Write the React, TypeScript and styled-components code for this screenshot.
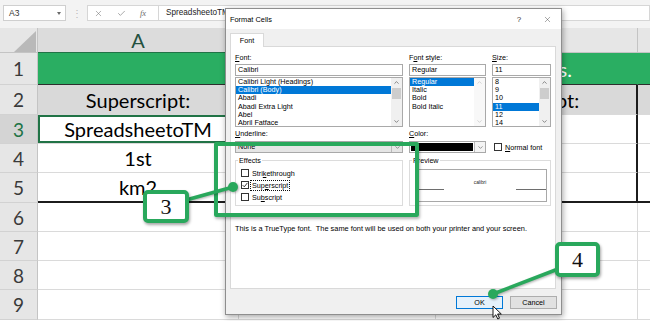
import React from "react";
import styled, { createGlobalStyle } from "styled-components";
import { X, Check, ChevronUp, ChevronDown } from "lucide-react";

const UI = `"Liberation Sans", Arial, sans-serif`;
const CELLFONT = `Lato, "Open Sans", sans-serif`;
const GREEN = "#2aae62";
const ANNOT = "#29a85c";
const GRID = "#dadada";

const GlobalStyle = createGlobalStyle`
  * { box-sizing: border-box; }
  html, body { margin: 0; padding: 0; background: #ffffff; }
  body { width: 650px; height: 321px; overflow: hidden; font-family: ${UI}; }
`;

const Page = styled.div`
  position: relative;
  width: 650px;
  height: 321px;
  overflow: hidden;
  background: #ffffff;
`;

/* ---------- formula bar ---------- */
const FormulaBar = styled.div`
  display: flex;
  align-items: flex-start;
  height: 28px;
  padding: 5px 0 0 3px;
  background: #f3f3f3;
`;
const NameBox = styled.div`
  display: flex;
  align-items: center;
  justify-content: space-between;
  width: 63px;
  height: 16px;
  padding: 0 4px 0 5px;
  background: #fff;
  border: 1px solid #cfcfcf;
  font: 8.5px ${UI};
  color: #333;
`;
const Caret = styled.span`
  width: 0;
  height: 0;
  border-left: 2.5px solid transparent;
  border-right: 2.5px solid transparent;
  border-top: 3px solid #6a6a6a;
`;
const Grip = styled.div`
  display: flex;
  align-items: center;
  justify-content: center;
  width: 21px;
  height: 16px;
  color: #b8b8b8;
  font: 10px ${UI};
`;
const FxBox = styled.div`
  display: flex;
  align-items: center;
  gap: 14px;
  width: 72px;
  height: 16px;
  padding-left: 6px;
  background: #fff;
  border: 1px solid #d6d6d6;
  color: #707070;
`;
const FxText = styled.span`
  width: 9px;
  font: italic 8.5px "Liberation Serif", serif;
  color: #6a6a6a;
`;
const FormulaInput = styled.div`
  flex: 1;
  height: 16px;
  padding-left: 7px;
  background: #fff;
  border: 1px solid #d6d6d6;
  border-left: none;
  font: 8.2px/14px ${UI};
  color: #222;
`;

/* ---------- sheet ---------- */
const Sheet = styled.div`
  display: grid;
  grid-template-columns: 38px 201px 197px 202px 100px;
  grid-template-rows: 25px 32px 30px 29px 29px 30px 29px 29px 29px 30px;
  width: 738px;
`;
const Corner = styled.div`
  display: flex;
  align-items: flex-end;
  justify-content: flex-end;
  padding: 0 1px 0 0;
  background: #e6e6e6;
  border-right: 1px solid #c4c4c4;
  border-bottom: 1px solid #c4c4c4;
`;
const ColHeader = styled.div<{ $selected?: boolean }>`
  display: flex;
  align-items: center;
  justify-content: center;
  background: ${(p) => (p.$selected ? "#dcdcdc" : "#e6e6e6")};
  border-right: 1px solid #c4c4c4;
  border-bottom: 1px solid ${(p) => (p.$selected ? "#217346" : "#c4c4c4")};
  color: ${(p) => (p.$selected ? "#24513f" : "#444")};
  font: 20px ${CELLFONT};
`;
const RowHeader = styled.div<{ $selected?: boolean }>`
  display: flex;
  align-items: center;
  justify-content: center;
  background: ${(p) => (p.$selected ? "#d4d4d4" : "#e6e6e6")};
  border-right: 1px solid #c4c4c4;
  border-bottom: 1px solid #d2d2d2;
  color: ${(p) => (p.$selected ? "#217346" : "#3a3a3a")};
  font: 19px ${CELLFONT};
`;
type Fill = "green" | "gray" | undefined;
const fillColor = (f: Fill) => (f === "green" ? GREEN : f === "gray" ? "#d9d9d9" : "#ffffff");
const Cell = styled.div<{
  $fill?: Fill;
  $active?: boolean;
  $edgeRight?: boolean;
  $edgeBottom?: boolean;
  $lineBottom?: boolean;
  $span?: number;
  $end?: boolean;
}>`
  display: flex;
  align-items: center;
  justify-content: ${(p) => (p.$end ? "flex-end" : "center")};
  padding-right: ${(p) => (p.$end ? "65px" : "0")};
  min-width: 0;
  overflow: hidden;
  white-space: nowrap;
  grid-column: span ${(p) => p.$span ?? 1};
  background: ${(p) => fillColor(p.$fill)};
  border-right: ${(p) =>
    p.$edgeRight ? "2px solid #1c1c1c" : `1px solid ${p.$fill === "green" ? GREEN : p.$fill === "gray" ? "#c9c9c9" : GRID}`};
  border-bottom: ${(p) =>
    p.$edgeBottom ? "2px solid #1c1c1c" : p.$lineBottom ? "1px solid #2e2e2e" : `1px solid ${GRID}`};
  box-shadow: ${(p) => (p.$active ? "inset 0 0 0 2px #217346" : "none")};
  font: 20px ${CELLFONT};
  color: ${(p) => (p.$fill === "green" ? "#ffffff" : "#000000")};
`;

/* ---------- dialog ---------- */
const Dialog = styled.div`
  position: absolute;
  left: 225px;
  top: 8px;
  width: 337px;
  height: 307px;
  display: flex;
  flex-direction: column;
  background: #f0f0f0;
  border: 1px solid #8e8e8e;
  box-shadow: 1px 2px 6px rgba(0, 0, 0, 0.35);
  font: 7.2px ${UI};
  color: #000;
`;
const TitleBar = styled.div`
  display: flex;
  align-items: center;
  height: 20px;
  padding-left: 4px;
  background: #ffffff;
  font-size: 7.4px;
`;
const TitleButtons = styled.div`
  display: flex;
  margin-left: auto;
  height: 100%;
`;
const TitleButton = styled.div`
  display: flex;
  align-items: center;
  justify-content: center;
  width: 28px;
  height: 100%;
  color: #333;
  font-size: 8px;
`;
const TabStrip = styled.div`
  display: flex;
  align-items: flex-end;
  height: 17px;
  padding-left: 4px;
`;
const Tab = styled.div`
  position: relative;
  z-index: 1;
  display: flex;
  align-items: center;
  justify-content: center;
  width: 34px;
  height: 14px;
  margin-bottom: -1px;
  background: #ffffff;
  border: 1px solid #d9d9d9;
  border-bottom: none;
`;
const Panel = styled.div`
  display: flex;
  flex-direction: column;
  height: 243px;
  margin: 0 5px 0 4px;
  padding: 6px 4px 0;
  background: #ffffff;
  border: 1px solid #d9d9d9;
`;
const Columns = styled.div<{ $gapTop?: number }>`
  display: grid;
  grid-template-columns: 168px 77px 59px;
  column-gap: 6px;
  margin-top: ${(p) => p.$gapTop ?? 0}px;
`;
const Field = styled.div<{ $offset?: number }>`
  display: flex;
  flex-direction: column;
  gap: 1px;
  padding-top: ${(p) => p.$offset ?? 0}px;
`;
const MidField = styled(Field)`
  gap: 2px;
`;
const Label = styled.div`
  height: 10px;
  line-height: 10px;
  white-space: nowrap;
`;
const TextBox = styled.div`
  height: 12px;
  padding-left: 2px;
  line-height: 10px;
  background: #fff;
  border: 1px solid #a9a9a9;
`;
const ListFrame = styled.div`
  display: flex;
  height: 50px;
  background: #fff;
  border: 1px solid #a9a9a9;
`;
const ListItems = styled.div`
  flex: 1;
  min-width: 0;
`;
const ListItem = styled.div<{ $selected?: boolean }>`
  height: 8.2px;
  padding-left: 2px;
  line-height: 8.2px;
  white-space: nowrap;
  overflow: hidden;
  background: ${(p) => (p.$selected ? "#0078d7" : "transparent")};
  color: ${(p) => (p.$selected ? "#ffffff" : "#000000")};
`;
const ScrollBar = styled.div<{ $disabled?: boolean }>`
  display: flex;
  flex-direction: column;
  width: 11px;
  background: ${(p) => (p.$disabled ? "#f8f8f8" : "#f0f0f0")};
  color: ${(p) => (p.$disabled ? "#c4c4c4" : "#5a5a5a")};
`;
const ScrollArrow = styled.div`
  display: flex;
  align-items: center;
  justify-content: center;
  height: 9px;
`;
const ScrollThumb = styled.div`
  height: 11px;
  margin: 1px 1px 0;
  background: #cdcdcd;
`;
const ScrollSpace = styled.div`
  flex: 1;
`;
const Combo = styled.div<{ $gray?: boolean }>`
  display: flex;
  align-items: stretch;
  height: 12px;
  background: ${(p) => (p.$gray ? "#e5e5e5" : "#ffffff")};
  border: 1px solid #a9a9a9;
`;
const ComboText = styled.div`
  flex: 1;
  padding-left: 2px;
  line-height: 10px;
`;
const Swatch = styled.div`
  flex: 1;
  margin: 1px;
  background: #000;
`;
const ComboArrow = styled.div<{ $gray?: boolean }>`
  display: flex;
  align-items: center;
  justify-content: center;
  width: 11px;
  border-left: 1px solid #b9b9b9;
  background: ${(p) => (p.$gray ? "#e5e5e5" : "#f4f4f4")};
  color: #555;
`;
const CheckRow = styled.div<{ $height?: number }>`
  display: flex;
  align-items: center;
  gap: 2px;
  height: ${(p) => p.$height ?? 12}px;
  padding-left: 2px;
  white-space: nowrap;
`;
const Box = styled.div`
  display: flex;
  align-items: center;
  justify-content: center;
  width: 8px;
  height: 8px;
  background: #fff;
  border: 1px solid #333;
`;
const CheckText = styled.span<{ $focus?: boolean }>`
  padding: 0 1px;
  line-height: 9px;
  outline: ${(p) => (p.$focus ? "1px dotted #111" : "none")};
`;
const Groups = styled.div`
  display: grid;
  grid-template-columns: 168px 1fr;
  column-gap: 6px;
  margin-top: 2.5px;
`;
const Group = styled.fieldset<{ $pt: number; $pl: number }>`
  margin: 0;
  min-width: 0;
  padding: ${(p) => p.$pt}px 3px 2px ${(p) => p.$pl}px;
  border: 1px solid #dcdcdc;
`;
const Legend = styled.legend<{ $shift?: number }>`
  margin-left: ${(p) => p.$shift ?? -1}px;
  padding: 0 1px;
  font-size: 7.2px;
  line-height: 9px;
`;
const PreviewBox = styled.div`
  display: grid;
  grid-template-columns: 25px 1fr 30px;
  align-items: start;
  height: 33px;
  border: 1px solid #a8a8a8;
  background: #fff;
`;
const BaseLine = styled.div`
  height: 1px;
  margin-top: 19px;
  background: #6e6e6e;
`;
const PreviewText = styled.div`
  margin-top: 10px;
  text-align: center;
  font: 4.8px ${UI};
  line-height: 6px;
  color: #222;
`;
const Note = styled.div`
  margin-top: 18px;
  line-height: 10px;
  font-size: 7.4px;
  white-space: pre;
`;
const Footer = styled.div`
  flex: 1;
  display: flex;
  align-items: center;
  justify-content: flex-end;
  gap: 7px;
  padding: 1px 4px 0 0;
`;
const Button = styled.div<{ $primary?: boolean }>`
  display: flex;
  align-items: center;
  justify-content: center;
  width: 47px;
  height: 13px;
  background: ${(p) => (p.$primary ? "#e5f1fb" : "#e1e1e1")};
  border: 1px solid ${(p) => (p.$primary ? "#0078d7" : "#adadad")};
`;

/* ---------- annotations ---------- */
const Highlight = styled.div`
  position: absolute;
  left: 214px;
  top: 142px;
  width: 205px;
  height: 75px;
  border: 4px solid ${ANNOT};
  border-radius: 2px;
  box-shadow: 1px 2px 3px rgba(0, 0, 0, 0.3);
`;
const Connectors = styled.svg`
  position: absolute;
  left: 0;
  top: 0;
  pointer-events: none;
  filter: drop-shadow(1px 1.5px 1px rgba(0, 0, 0, 0.3));
`;
const Callout = styled.div<{ $x: number; $y: number; $w: number; $h: number }>`
  position: absolute;
  left: ${(p) => p.$x}px;
  top: ${(p) => p.$y}px;
  width: ${(p) => p.$w}px;
  height: ${(p) => p.$h}px;
  display: flex;
  align-items: center;
  justify-content: center;
  background: #ffffff;
  border: 4px solid ${ANNOT};
  border-radius: 5px;
  box-shadow: 1px 2px 3px rgba(0, 0, 0, 0.35);
  font: 22px "Liberation Serif", "Times New Roman", serif;
  color: #111;
`;
const Cursor = styled.svg`
  position: absolute;
  left: 492px;
  top: 305px;
`;

/* ---------- pieces ---------- */
type ListProps = { items: string[]; selected: number; disabled?: boolean };
const ListBox = ({ items, selected, disabled }: ListProps) => (
  <ListFrame>
    <ListItems>
      {items.map((t, i) => (
        <ListItem key={t} $selected={i === selected}>
          {t}
        </ListItem>
      ))}
    </ListItems>
    <ScrollBar $disabled={disabled}>
      <ScrollArrow>
        <ChevronUp size={7} strokeWidth={2.4} />
      </ScrollArrow>
      {!disabled && <ScrollThumb />}
      <ScrollSpace />
      <ScrollArrow>
        <ChevronDown size={7} strokeWidth={2.4} />
      </ScrollArrow>
    </ScrollBar>
  </ListFrame>
);

const CheckBox = ({ checked }: { checked?: boolean }) => (
  <Box>
    {checked && (
      <svg width="6" height="6" viewBox="0 0 6 6">
        <path d="M0.6 3.1 L2.3 4.8 L5.4 0.9" fill="none" stroke="#222" strokeWidth="0.9" />
      </svg>
    )}
  </Box>
);

export default function App() {
  const lowerRows = [6, 7, 8, 9];
  return (
    <Page>
      <GlobalStyle />
      <FormulaBar>
        <NameBox>
          A3
          <Caret />
        </NameBox>
        <Grip>⋮</Grip>
        <FxBox>
          <X size={9} strokeWidth={1.4} />
          <Check size={9} strokeWidth={1.6} />
          <FxText>fx</FxText>
        </FxBox>
        <FormulaInput>SpreadsheetoTM</FormulaInput>
      </FormulaBar>

      <Sheet>
        <Corner>
          <svg width="22" height="21" viewBox="0 0 22 21">
            <polygon points="22,0 22,21 0,21" fill="#b9b9b9" />
          </svg>
        </Corner>
        <ColHeader $selected>A</ColHeader>
        <ColHeader>B</ColHeader>
        <ColHeader>C</ColHeader>
        <ColHeader />

        <RowHeader>1</RowHeader>
        <Cell $fill="green" $span={3} $end $lineBottom>
          Subscripts.
        </Cell>
        <Cell $fill="green" $lineBottom />

        <RowHeader>2</RowHeader>
        <Cell $fill="gray">Superscript:</Cell>
        <Cell $fill="gray" />
        <Cell $fill="gray" $edgeRight>
          Subscript:
        </Cell>
        <Cell $fill="gray" />

        <RowHeader $selected>3</RowHeader>
        <Cell $active>SpreadsheetoTM</Cell>
        <Cell />
        <Cell $edgeRight />
        <Cell />

        <RowHeader>4</RowHeader>
        <Cell>1st</Cell>
        <Cell />
        <Cell $edgeRight />
        <Cell />

        <RowHeader>5</RowHeader>
        <Cell $edgeBottom>km2</Cell>
        <Cell $edgeBottom />
        <Cell $edgeBottom $edgeRight />
        <Cell $edgeBottom />

        {lowerRows.map((n) => (
          <React.Fragment key={n}>
            <RowHeader>{n}</RowHeader>
            <Cell />
            <Cell />
            <Cell />
            <Cell />
          </React.Fragment>
        ))}
      </Sheet>

      <Dialog>
        <TitleBar>
          Format Cells
          <TitleButtons>
            <TitleButton>?</TitleButton>
            <TitleButton>
              <X size={9} strokeWidth={1.1} />
            </TitleButton>
          </TitleButtons>
        </TitleBar>
        <TabStrip>
          <Tab>Font</Tab>
        </TabStrip>
        <Panel>
          <Columns>
            <Field>
              <Label>
                <u>F</u>ont:
              </Label>
              <TextBox>Calibri</TextBox>
              <ListBox
                items={["Calibri Light (Headings)", "Calibri (Body)", "Abadi", "Abadi Extra Light", "Abel", "Abril Fatface"]}
                selected={1}
              />
            </Field>
            <Field>
              <Label>
                F<u>o</u>nt style:
              </Label>
              <TextBox>Regular</TextBox>
              <ListBox items={["Regular", "Italic", "Bold", "Bold Italic"]} selected={0} disabled />
            </Field>
            <Field>
              <Label>
                <u>S</u>ize:
              </Label>
              <TextBox>11</TextBox>
              <ListBox items={["8", "9", "10", "11", "12", "14"]} selected={3} />
            </Field>
          </Columns>

          <Columns $gapTop={2}>
            <MidField>
              <Label>
                <u>U</u>nderline:
              </Label>
              <Combo $gray>
                <ComboText>None</ComboText>
                <ComboArrow $gray>
                  <ChevronDown size={7} strokeWidth={2} />
                </ComboArrow>
              </Combo>
            </MidField>
            <MidField>
              <Label>
                <u>C</u>olor:
              </Label>
              <Combo>
                <Swatch />
                <ComboArrow>
                  <ChevronDown size={7} strokeWidth={2} />
                </ComboArrow>
              </Combo>
            </MidField>
            <MidField $offset={12}>
              <CheckRow $height={12}>
                <CheckBox />
                <CheckText>
                  <u>N</u>ormal font
                </CheckText>
              </CheckRow>
            </MidField>
          </Columns>

          <Groups>
            <Group $pt={2.5} $pl={3}>
              <Legend>Effects</Legend>
              <CheckRow>
                <CheckBox />
                <CheckText>
                  Stri<u>k</u>ethrough
                </CheckText>
              </CheckRow>
              <CheckRow>
                <CheckBox checked />
                <CheckText $focus>
                  Sup<u>e</u>rscript
                </CheckText>
              </CheckRow>
              <CheckRow>
                <CheckBox />
                <CheckText>
                  Su<u>b</u>script
                </CheckText>
              </CheckRow>
            </Group>
            <Group $pt={4.5} $pl={8}>
              <Legend $shift={-6}>Preview</Legend>
              <PreviewBox>
                <BaseLine />
                <PreviewText>calibri</PreviewText>
                <BaseLine />
              </PreviewBox>
            </Group>
          </Groups>

          <Note>This is a TrueType font.  The same font will be used on both your printer and your screen.</Note>
        </Panel>
        <Footer>
          <Button $primary>OK</Button>
          <Button>Cancel</Button>
        </Footer>
      </Dialog>

      <Highlight />
      <Connectors width="650" height="321" viewBox="0 0 650 321">
        <line x1="186" y1="200" x2="233" y2="187" stroke={ANNOT} strokeWidth="3.5" strokeLinecap="round" />
        <circle cx="233" cy="187" r="5" fill={ANNOT} />
        <line x1="558" y1="269" x2="493" y2="294" stroke={ANNOT} strokeWidth="3.5" strokeLinecap="round" />
        <circle cx="493" cy="294" r="5" fill={ANNOT} />
      </Connectors>
      <Callout $x={143} $y={190} $w={46} $h={33}>
        3
      </Callout>
      <Callout $x={555} $y={242} $w={45} $h={35}>
        4
      </Callout>
      <Cursor width="11" height="15" viewBox="0 0 11 15">
        <path d="M1 1 L1 12.5 L3.8 9.8 L5.8 14 L7.5 13.2 L5.6 9 L9.3 9 Z" fill="#fff" stroke="#000" strokeWidth="0.9" strokeLinejoin="round" />
      </Cursor>
    </Page>
  );
}
